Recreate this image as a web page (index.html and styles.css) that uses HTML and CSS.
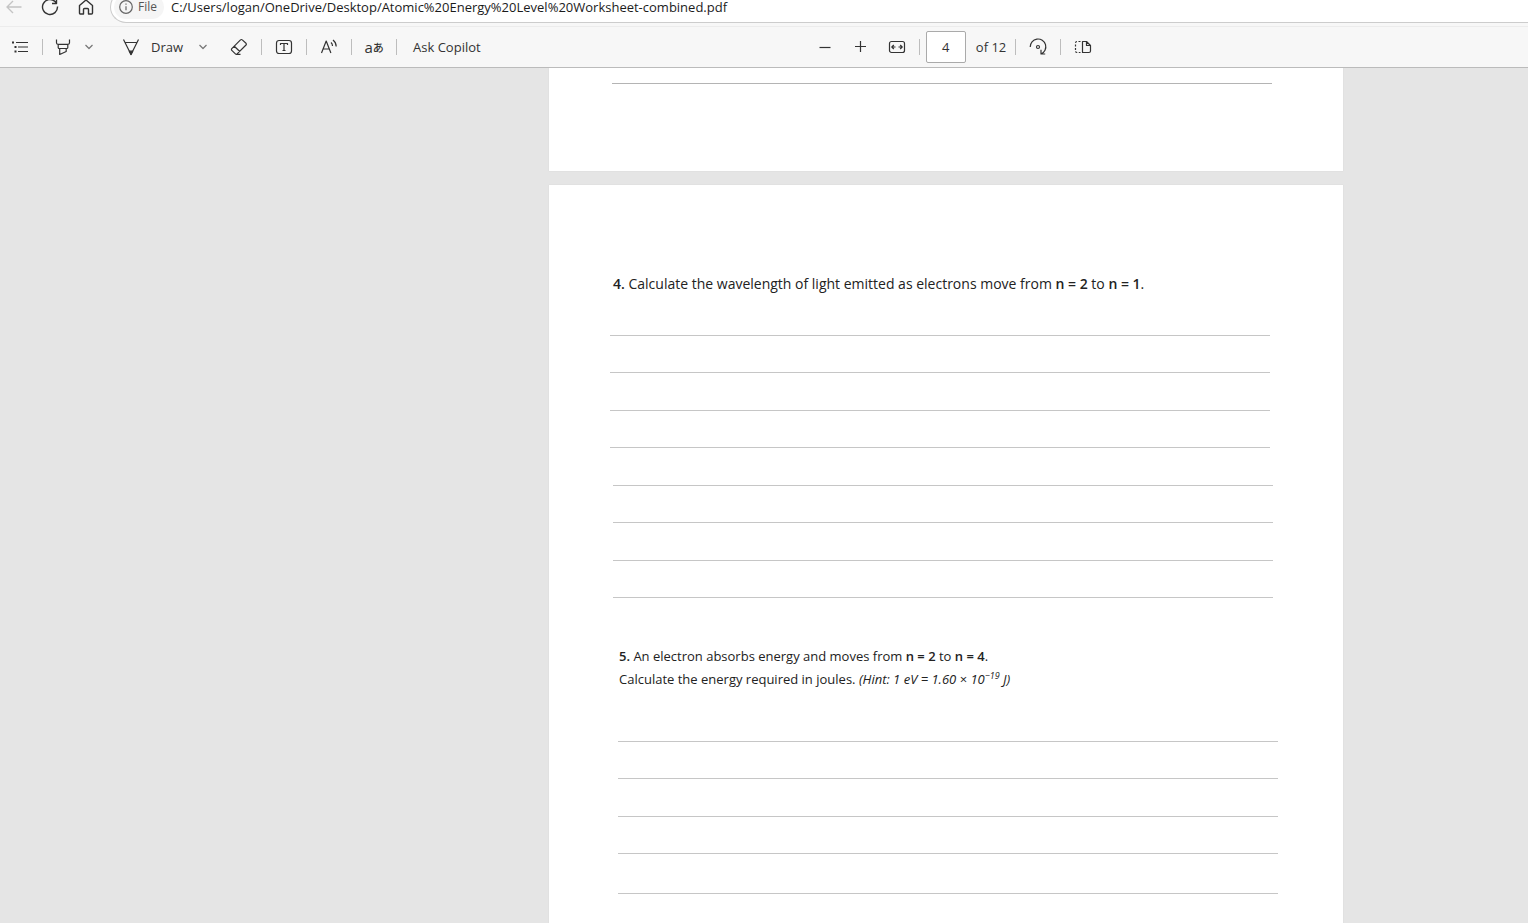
FILE: index.html
```
<!DOCTYPE html>
<html lang="en">
<head>
    <meta charset="UTF-8">
    <meta name="viewport" content="width=device-width, initial-scale=1.0">
    <title>Atomic Energy Level Worksheet-combined.pdf</title>
    <link rel="stylesheet" href="styles.css">
</head>
<body>

    <header class="address-bar">
        <button class="nav-btn" aria-label="Back" disabled>
            <svg width="20" height="20" viewBox="0 0 20 20"><path d="M17.500 10H3M9 4l-6 6 6 6"/></svg>
        </button>
        <button class="nav-btn" aria-label="Refresh">
            <svg width="20" height="20" viewBox="0 0 20 20"><path d="M17.500 9.500a7.500 7.500 0 1 1-2.500-5.100L16.500 6M16.500 2v4.500H12"/></svg>
        </button>
        <button class="nav-btn" aria-label="Home">
            <svg width="20" height="20" viewBox="0 0 20 20"><path d="M3.500 8.500 10 3l6.500 5.500V16a1 1 0 0 1-1 1H12.500v-4.500a1 1 0 0 0-1-1h-3a1 1 0 0 0-1 1V17h-3a1 1 0 0 1-1-1z"/></svg>
        </button>
        <div class="omnibox">
            <button class="file-chip">
                <svg width="14" height="14" viewBox="0 0 14 14"><circle cx="7" cy="7" r="6.300"/><path d="M7 6.200v4M7 3.600v1.200"/></svg>
                <span>File</span>
            </button>
            <input class="url" type="text" aria-label="Address" value="C:/Users/logan/OneDrive/Desktop/Atomic%20Energy%20Level%20Worksheet-combined.pdf">
        </div>
    </header>

    <div class="toolbar">
        <div class="tools">
            <button class="icon-btn" aria-label="Contents">
                <svg width="18" height="16" viewBox="0 0 18 16"><path d="M5 3.500h12M7 8h10M7 12.500h10"/><path class="dots" d="M1 3.500h2M3.500 8h2M3.500 12.500h2"/></svg>
            </button>
            <span class="sep"></span>
            <div class="split">
                <button class="icon-btn narrow" aria-label="Highlight">
                    <svg width="16" height="18" viewBox="0 0 16 18"><path d="M1.500 1.500v3.300a1.500 1.500 0 0 0 1.500 1.500h10a1.500 1.500 0 0 0 1.500-1.500V1.500M3.200 6.300v3.200a1 1 0 0 0 1 1h7.600a1 1 0 0 0 1-1V6.300M4.700 10.500v6l6.500-3v-3"/></svg>
                </button>
                <button class="chevron" aria-label="Highlight colors">
                    <svg width="8" height="6" viewBox="0 0 8 6"><path d="M.500 1 4 4.500 7.500 1"/></svg>
                </button>
            </div>
            <div class="split">
                <button class="draw-btn">
                    <svg width="20" height="18" viewBox="0 0 20 18"><path d="M2.500 1.500 4 4.500h12l1.500-3M4 4.500l6 12 6-12"/><path class="fill" d="M8.300 13.200h3.400L10 16.500z"/></svg>
                    Draw
                </button>
                <button class="chevron" aria-label="Ink properties">
                    <svg width="8" height="6" viewBox="0 0 8 6"><path d="M.500 1 4 4.500 7.500 1"/></svg>
                </button>
            </div>
            <button class="icon-btn" aria-label="Erase">
                <svg width="18" height="18" viewBox="0 0 18 18"><path d="M10.500 1.900 1.800 10.600a1.200 1.200 0 0 0 0 1.700l3.600 3.600a1.200 1.200 0 0 0 1.700 0l8.900-8.900a1.200 1.200 0 0 0 0-1.700l-3.700-3.400a1.200 1.200 0 0 0-1.800 0zM4.300 8.200l5.500 5.300M6 16.300h4.500"/></svg>
            </button>
            <span class="sep"></span>
            <button class="icon-btn" aria-label="Add text">
                <svg width="18" height="18" viewBox="0 0 18 18"><rect x="1.500" y="2.500" width="15" height="13" rx="2.500"/><path d="M5.500 7V5.500h7V7M9 5.500v7M7.500 12.500h3"/></svg>
            </button>
            <span class="sep"></span>
            <button class="icon-btn" aria-label="Read aloud">
                <svg width="18" height="18" viewBox="0 0 18 18"><path d="m1.500 15 4.700-12 4.700 12M3.200 11h6M11 4.500q1.500 1.300 1.500 3.500M13 2q3.200 2.500 3.200 6.500"/></svg>
            </button>
            <span class="sep"></span>
            <button class="icon-btn translate" aria-label="Translate"><span class="latin">a</span><span class="kana">あ</span></button>
            <span class="sep"></span>
            <button class="text-btn">Ask Copilot</button>
        </div>

        <div class="page-tools">
            <div class="zoom">
                <button class="icon-btn" aria-label="Zoom out">
                    <svg width="14" height="14" viewBox="0 0 14 14"><path d="M1.500 7.500h11"/></svg>
                </button>
                <button class="icon-btn" aria-label="Zoom in">
                    <svg width="14" height="14" viewBox="0 0 14 14"><path d="M1 6.500h11M6.500 1v11"/></svg>
                </button>
                <button class="icon-btn" aria-label="Fit to width">
                    <svg width="18" height="16" viewBox="0 0 18 16"><rect x="1.500" y="2.500" width="15" height="11" rx="2"/><path d="M4 8h3.500M5.800 6 3.800 8l2 2M14 8h-3.500M12.200 6l2 2-2 2"/></svg>
                </button>
            </div>
            <span class="sep"></span>
            <input class="page-number" id="page" type="text" value="4">
            <label class="page-total" for="page">of 12</label>
            <span class="sep"></span>
            <button class="icon-btn" aria-label="Rotate">
                <svg width="18" height="18" viewBox="0 0 18 18"><path d="M1.200 9A7.800 7.800 0 1 1 12 16M12 11.800V16h4.200"/><circle cx="9" cy="9" r="1.500"/></svg>
            </button>
            <span class="sep"></span>
            <button class="icon-btn" aria-label="Page view">
                <svg width="18" height="16" viewBox="0 0 18 16"><path stroke-dasharray="2 1.500" d="M6.500 2.500H3a1.500 1.500 0 0 0-1.500 1.500v8A1.500 1.500 0 0 0 3 13.500h3.500"/><path d="M8.500 2.500h4l4 4V12a1.500 1.500 0 0 1-1.500 1.500H8.500zM12.500 2.500v4h4"/></svg>
            </button>
        </div>
    </div>

    <main class="viewer">
        <section class="page page-end">
            <hr>
        </section>

        <section class="page page-current">
            <p class="question first">
                <b>4.</b> Calculate the wavelength of light emitted as electrons move from <b>n = 2</b> to <b>n = 1</b>.
            </p>
            <div class="lines">
                <hr><hr><hr><hr>
            </div>
            <div class="lines shifted">
                <hr><hr><hr><hr>
            </div>

            <p class="question second">
                <b>5.</b> An electron absorbs energy and moves from <b>n = 2</b> to <b>n = 4</b>.<br>
                Calculate the energy required in joules. <i>(Hint: 1 eV = 1.60 × 10<sup>−19</sup> J)</i>
            </p>
            <div class="lines indented">
                <hr><hr><hr><hr>
            </div>
            <div class="lines indented last">
                <hr>
            </div>
        </section>
    </main>

</body>
</html>
```
FILE: styles.css
```
* {
    box-sizing: border-box;
}
body {
    margin: 0;
    height: 100vh;
    display: flex;
    flex-direction: column;
    overflow: hidden;
    font-family: "Open Sans", "Noto Sans CJK JP", sans-serif;
    font-size: 13px;
    color: #333;
    background-color: #f7f7f7;
}
button, input {
    font: inherit;
    color: inherit;
    border: none;
    background: none;
    padding: 0;
}
svg {
    flex: none;
    fill: none;
    stroke: #333;
    stroke-width: 1.2;
    stroke-linejoin: round;
}
svg .fill {
    fill: #333;
}
svg .dots {
    stroke-width: 2;
}

/* Address bar */
.address-bar {
    display: flex;
    align-items: flex-end;
    gap: 4px;
    height: 27px;
    padding: 0 0 3px;
    overflow: hidden;
    border-bottom: 1px solid #ececec;
    flex: none;
}
.nav-btn {
    display: flex;
    align-items: center;
    justify-content: center;
    width: 32px;
    height: 32px;
}
.nav-btn:first-child {
    width: 28px;
    margin-right: 2px;
}
.nav-btn:disabled svg {
    stroke: #c4c4c4;
}
.nav-btn svg {
    stroke-width: 1.4;
}
.omnibox {
    flex: 1;
    display: flex;
    align-items: center;
    height: 32px;
    margin-left: 4px;
    padding-left: 3px;
    background-color: #fff;
    border: 1px solid #ccc;
    border-right: none;
    border-radius: 16px 0 0 16px;
}
.file-chip {
    display: flex;
    align-items: center;
    gap: 5px;
    height: 24px;
    padding: 0 7px 0 5px;
    border-radius: 12px;
    background-color: #f5f5f5;
    font-size: 12px;
    line-height: 12px;
    color: #555;
}
.file-chip svg {
    stroke: #666;
}
.url {
    flex: 1;
    margin-left: 7px;
    color: #1b1b1b;
    outline: none;
}

/* PDF toolbar */
.toolbar {
    display: flex;
    align-items: center;
    height: 41px;
    border-bottom: 1px solid #bbb;
    flex: none;
}
.tools, .page-tools, .split, .zoom {
    display: flex;
    align-items: center;
}
.tools {
    width: calc(53% - 1px);
    padding-left: 4px;
}
.split {
    margin-right: 8px;
}
.zoom {
    gap: 4px;
}
.icon-btn, .chevron {
    display: flex;
    align-items: center;
    justify-content: center;
    width: 32px;
    height: 32px;
}
.narrow {
    width: 28px;
}
.chevron {
    width: 24px;
}
.chevron svg {
    stroke: #777;
}
.sep {
    width: 1px;
    height: 16px;
    margin: 0 6px;
    background-color: #bdbdbd;
}
.draw-btn {
    display: flex;
    align-items: center;
    gap: 10px;
    height: 32px;
    padding: 0 8px 0 12px;
}
.text-btn {
    height: 32px;
    padding: 0 10px;
}
.translate .latin {
    font-size: 15px;
}
.translate .kana {
    font-size: 11px;
    font-weight: 500;
}
.page-number {
    width: 40px;
    height: 32px;
    border: 1px solid #aaa;
    border-radius: 2px;
    background-color: #fff;
    text-align: center;
}
.page-total {
    padding: 0 3px 0 10px;
}

/* Document */
.viewer {
    flex: 1;
    min-height: 0;
    overflow: hidden;
    display: grid;
    grid-template-columns: 549fr minmax(0, 794px) 185fr;
    grid-template-rows: auto 1fr;
    row-gap: 14px;
    background-color: #e5e5e5;
}
.page {
    grid-column: 2;
    background-color: #fff;
    box-shadow: 0 0 1px #ccc;
}
.page hr {
    width: 100%;
    height: 1px;
    margin: 0;
    border: none;
    background-color: #c6c6c6;
}
.page-end {
    padding: 15px 71px 87px 63px;
}
.page-end hr {
    background-color: #b4b4b4;
}
.page-current {
    padding: 87px 73px 0 61px;
}
.question {
    margin: 0;
    color: #222;
    line-height: 23px;
}
.question b {
    font-weight: 600;
}
.question sup {
    font-size: 9px;
    line-height: 0;
}
.first {
    padding-left: 3px;
    font-size: 14px;
}
.second {
    margin-top: 47px;
    padding-left: 9px;
}
.lines {
    display: flex;
    flex-direction: column;
    justify-content: space-between;
    height: 113px;
    margin-top: 40px;
}
.shifted {
    margin: 37px -3px 0 3px;
}
.indented {
    margin: 50px -8px 0 8px;
}
.last {
    height: 1px;
    margin-top: 39px;
}
```
